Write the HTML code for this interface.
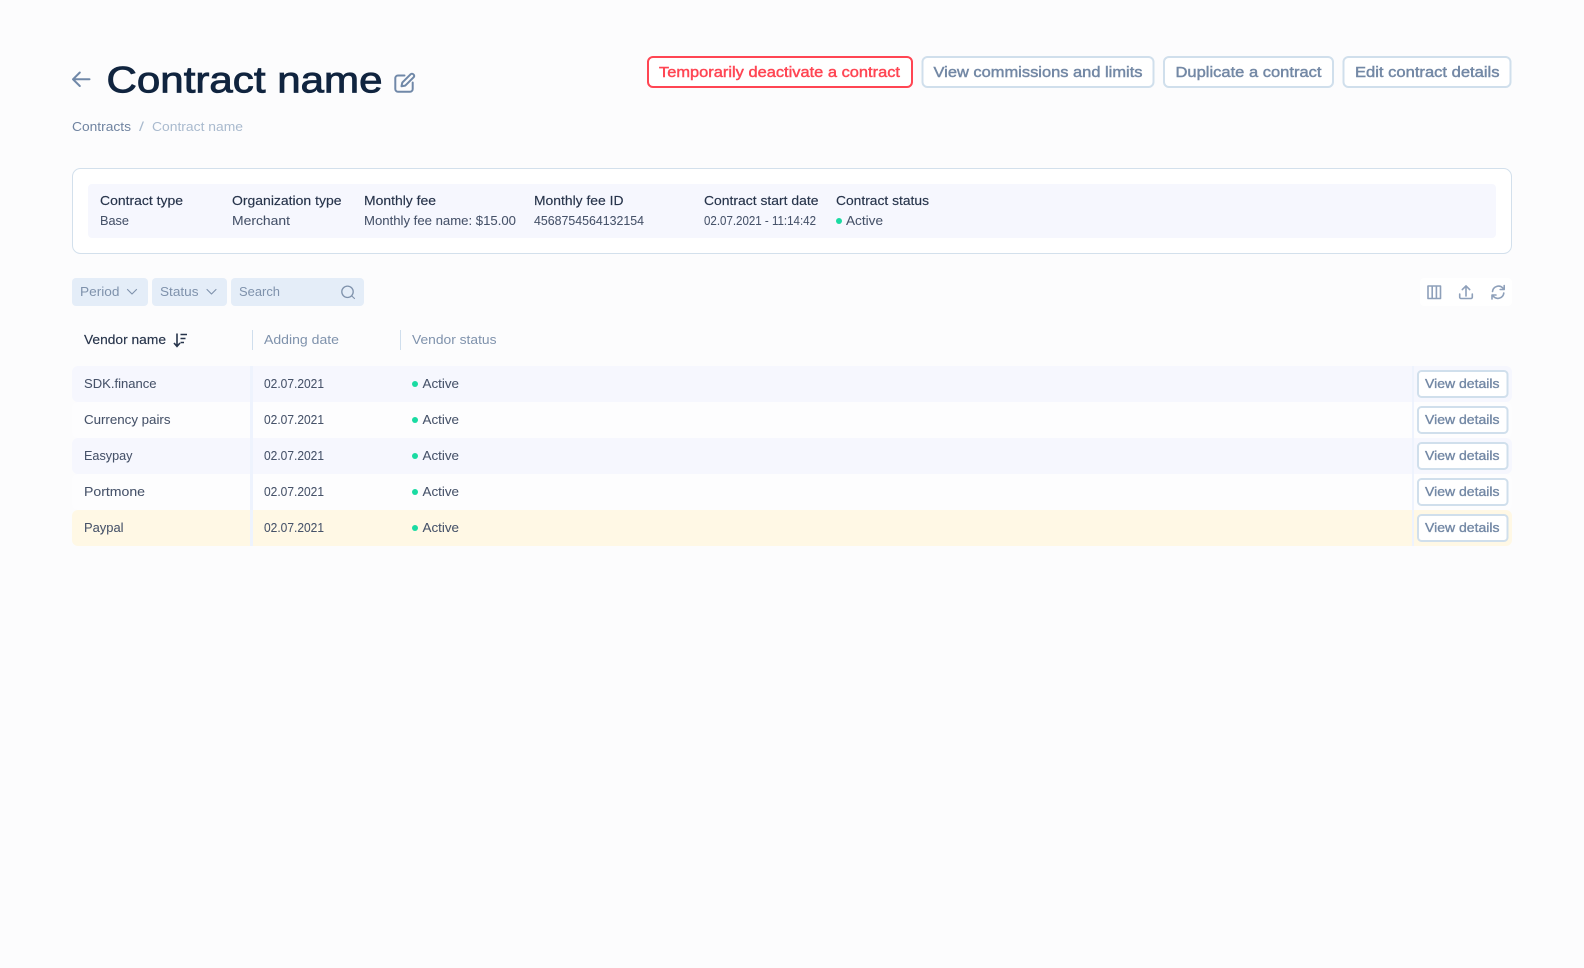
<!DOCTYPE html>
<html><head><meta charset="utf-8"><title>Contract name</title>
<style>
html,body{margin:0;padding:0;background:#fcfcfd;width:1584px;height:968px;overflow:hidden}
svg{display:block;position:absolute;left:0;top:0}
text{font-family:"Liberation Sans",Arial,sans-serif;font-size:13px}
.lab{fill:#27344b;stroke:#27344b;stroke-width:.15}
.val{fill:#465269;stroke:#465269;stroke-width:.05}
.btn{font-size:15px;fill:#7388a5;stroke:#7388a5;stroke-width:.45}
.vd{fill:#7388a5;stroke:#7388a5;stroke-width:.35}
.fil{fill:#7f92ac}
.hd{fill:#7f92ac}
.ic{fill:none;stroke:#7088a8;stroke-width:2;stroke-linecap:round;stroke-linejoin:round}
.ic2{fill:none;stroke:#7f92ac;stroke-width:1.1;stroke-linecap:round;stroke-linejoin:round}
.tb{fill:none;stroke:#8ea0ba;stroke-width:1.6;stroke-linecap:round;stroke-linejoin:round}
</style></head>
<body>
<svg width="1584" height="968" viewBox="0 0 1584 968" xmlns="http://www.w3.org/2000/svg">
<rect width="1584" height="968" fill="#fcfcfd"/>

<!-- header -->
<path class="ic" d="M89.5 79.3H73 M79.8 72.5L73 79.3L79.8 86"/>
<text x="106.5" y="92.5" textLength="276" lengthAdjust="spacingAndGlyphs" style="font-size:37px;fill:#10243f;stroke:#10243f;stroke-width:.85">Contract name</text>
<path class="ic" d="M404.5 75.5H398a2.7 2.7 0 0 0-2.7 2.7v10.8a2.7 2.7 0 0 0 2.7 2.7h12a2.7 2.7 0 0 0 2.7-2.7v-6.5"/>
<path class="ic" d="M401.5 86.2l.8-3.6 8.4-8.4a1.8 1.8 0 0 1 2.5 0l.5.5a1.8 1.8 0 0 1 0 2.5l-8.4 8.4z"/>

<text x="72" y="131" textLength="59" lengthAdjust="spacingAndGlyphs" fill="#6f83a0">Contracts</text>
<text x="139" y="131" textLength="5" lengthAdjust="spacingAndGlyphs" fill="#a9bace">/</text>
<text x="152" y="131" textLength="91" lengthAdjust="spacingAndGlyphs" fill="#a9bace">Contract name</text>

<!-- action buttons -->
<rect x="648" y="57" width="264" height="30" rx="5" fill="#fff" stroke="#ff4553" stroke-width="2"/>
<text x="659" y="77" textLength="241" lengthAdjust="spacingAndGlyphs" class="btn" style="fill:#ff4553;stroke:#ff4553">Temporarily deactivate a contract</text>
<rect x="922.5" y="57" width="231" height="30" rx="5" fill="#fff" stroke="#d0dfec" stroke-width="2"/>
<text x="933.5" y="77" textLength="209" lengthAdjust="spacingAndGlyphs" class="btn">View commissions and limits</text>
<rect x="1164" y="57" width="169" height="30" rx="5" fill="#fff" stroke="#d0dfec" stroke-width="2"/>
<text x="1175.5" y="77" textLength="146" lengthAdjust="spacingAndGlyphs" class="btn">Duplicate a contract</text>
<rect x="1343.5" y="57" width="167" height="30" rx="5" fill="#fff" stroke="#d0dfec" stroke-width="2"/>
<text x="1355" y="77" textLength="144.5" lengthAdjust="spacingAndGlyphs" class="btn">Edit contract details</text>

<!-- info card -->
<rect x="72.5" y="168.5" width="1439" height="85" rx="8" fill="#fff" stroke="#d3e0ec"/>
<rect x="88" y="184" width="1408" height="54" rx="4" fill="#f6f7fe"/>
<text x="100" y="205" textLength="83" lengthAdjust="spacingAndGlyphs" class="lab">Contract type</text>
<text x="100" y="225" textLength="29" lengthAdjust="spacingAndGlyphs" class="val">Base</text>
<text x="232" y="205" textLength="109.5" lengthAdjust="spacingAndGlyphs" class="lab">Organization type</text>
<text x="232" y="225" textLength="58" lengthAdjust="spacingAndGlyphs" class="val">Merchant</text>
<text x="364" y="205" textLength="72" lengthAdjust="spacingAndGlyphs" class="lab">Monthly fee</text>
<text x="364" y="225" textLength="152" lengthAdjust="spacingAndGlyphs" class="val">Monthly fee name: $15.00</text>
<text x="534" y="205" textLength="89.5" lengthAdjust="spacingAndGlyphs" class="lab">Monthly fee ID</text>
<text x="534" y="225" textLength="110" lengthAdjust="spacingAndGlyphs" class="val">4568754564132154</text>
<text x="704" y="205" textLength="114.5" lengthAdjust="spacingAndGlyphs" class="lab">Contract start date</text>
<text x="704" y="225" textLength="112" lengthAdjust="spacingAndGlyphs" class="val">02.07.2021 - 11:14:42</text>
<text x="836" y="205" textLength="93" lengthAdjust="spacingAndGlyphs" class="lab">Contract status</text>
<circle cx="839" cy="221" r="3" fill="#1adba2"/>
<text x="846" y="225" textLength="37" lengthAdjust="spacingAndGlyphs" class="val">Active</text>

<!-- filters -->
<rect x="72" y="278" width="76" height="28" rx="4" fill="#e4edf8"/>
<text x="80" y="296" textLength="39.5" lengthAdjust="spacingAndGlyphs" class="fil">Period</text>
<path class="ic2" d="M127.5 289.5l4.5 4.5 4.5-4.5"/>
<rect x="152" y="278" width="75" height="28" rx="4" fill="#e4edf8"/>
<text x="160" y="296" textLength="38.5" lengthAdjust="spacingAndGlyphs" class="fil">Status</text>
<path class="ic2" d="M207 289.5l4.5 4.5 4.5-4.5"/>
<rect x="231" y="278" width="133" height="28" rx="4" fill="#e4edf8"/>
<text x="239" y="296" textLength="41" lengthAdjust="spacingAndGlyphs" class="fil">Search</text>
<circle cx="347.5" cy="291.8" r="5.7" fill="none" stroke="#7f92ac" stroke-width="1.3"/>
<path class="ic2" d="M351.8 296l2.7 2.5"/>

<!-- toolbar -->
<rect x="1420" y="278" width="92" height="28" rx="4" fill="#fff"/>
<path class="tb" d="M1428 286h12.5v12.5h-12.5z M1432.2 286v12.5 M1436.4 286v12.5" stroke-linecap="butt"/>
<path class="tb" d="M1466 296v-9.5 M1462.3 289.6l3.7-3.7 3.7 3.7 M1459.7 294v3.2a1.3 1.3 0 0 0 1.3 1.3h10a1.3 1.3 0 0 0 1.3-1.3V294"/>
<path class="tb" d="M1492.5 291.5a6 6 0 0 1 10.3-3.5l1.2 1.3 M1504.2 285.5v4h-4 M1503.8 293a6 6 0 0 1-10.3 3.5l-1.2-1.3 M1492 299v-4h4"/>

<!-- table head -->
<text x="84" y="344" textLength="82" lengthAdjust="spacingAndGlyphs" class="lab">Vendor name</text>
<path d="M177 333.500v12.500 M174 343l3 3.400 3-3.400" fill="none" stroke="#27344b" stroke-width="1.600"/>
<path d="M180.500 334.500h6.500 M180.500 338.500h5 M180.500 342.500h3.500" fill="none" stroke="#27344b" stroke-width="1.500"/>
<rect x="252" y="330" width="1" height="20" fill="#cfdeed"/>
<text x="264" y="344" textLength="75" lengthAdjust="spacingAndGlyphs" class="hd">Adding date</text>
<rect x="400" y="330" width="1" height="20" fill="#cfdeed"/>
<text x="412" y="344" textLength="84.5" lengthAdjust="spacingAndGlyphs" class="hd">Vendor status</text>

<!-- rows -->
<rect x="72" y="366" width="1440" height="36" rx="6" fill="#f6f7fe"/>
<rect x="72" y="402" width="1440" height="36" rx="6" fill="#fdfdfe"/>
<rect x="72" y="438" width="1440" height="36" rx="6" fill="#f6f7fe"/>
<rect x="72" y="474" width="1440" height="36" rx="6" fill="#fdfdfe"/>
<rect x="72" y="510" width="1440" height="36" rx="6" fill="#fff8e5"/>
<rect x="250" y="366" width="3" height="180" fill="#eef3fd"/>
<rect x="1412" y="366" width="2" height="180" fill="#eef3fd"/>

<text x="84" y="388" textLength="72.5" lengthAdjust="spacingAndGlyphs" class="val">SDK.finance</text>
<text x="84" y="424" textLength="86.5" lengthAdjust="spacingAndGlyphs" class="val">Currency pairs</text>
<text x="84" y="460" textLength="48.5" lengthAdjust="spacingAndGlyphs" class="val">Easypay</text>
<text x="84" y="496" textLength="61" lengthAdjust="spacingAndGlyphs" class="val">Portmone</text>
<text x="84" y="532" textLength="39.5" lengthAdjust="spacingAndGlyphs" class="val">Paypal</text>

<text x="264" y="388" textLength="60" lengthAdjust="spacingAndGlyphs" class="val">02.07.2021</text>
<text x="264" y="424" textLength="60" lengthAdjust="spacingAndGlyphs" class="val">02.07.2021</text>
<text x="264" y="460" textLength="60" lengthAdjust="spacingAndGlyphs" class="val">02.07.2021</text>
<text x="264" y="496" textLength="60" lengthAdjust="spacingAndGlyphs" class="val">02.07.2021</text>
<text x="264" y="532" textLength="60" lengthAdjust="spacingAndGlyphs" class="val">02.07.2021</text>

<circle cx="415" cy="384" r="3" fill="#1adba2"/>
<circle cx="415" cy="420" r="3" fill="#1adba2"/>
<circle cx="415" cy="456" r="3" fill="#1adba2"/>
<circle cx="415" cy="492" r="3" fill="#1adba2"/>
<circle cx="415" cy="528" r="3" fill="#1adba2"/>
<text x="422.5" y="388" textLength="36.5" lengthAdjust="spacingAndGlyphs" class="val">Active</text>
<text x="422.5" y="424" textLength="36.5" lengthAdjust="spacingAndGlyphs" class="val">Active</text>
<text x="422.5" y="460" textLength="36.5" lengthAdjust="spacingAndGlyphs" class="val">Active</text>
<text x="422.5" y="496" textLength="36.5" lengthAdjust="spacingAndGlyphs" class="val">Active</text>
<text x="422.5" y="532" textLength="36.5" lengthAdjust="spacingAndGlyphs" class="val">Active</text>

<g fill="#fff" stroke="#d0dfec" stroke-width="2">
<rect x="1418" y="371" width="89.5" height="26" rx="3.5"/>
<rect x="1418" y="407" width="89.5" height="26" rx="3.5"/>
<rect x="1418" y="443" width="89.5" height="26" rx="3.5"/>
<rect x="1418" y="479" width="89.5" height="26" rx="3.5"/>
<rect x="1418" y="515" width="89.5" height="26" rx="3.5"/>
</g>
<text x="1425" y="388" textLength="74.5" lengthAdjust="spacingAndGlyphs" class="vd">View details</text>
<text x="1425" y="424" textLength="74.5" lengthAdjust="spacingAndGlyphs" class="vd">View details</text>
<text x="1425" y="460" textLength="74.5" lengthAdjust="spacingAndGlyphs" class="vd">View details</text>
<text x="1425" y="496" textLength="74.5" lengthAdjust="spacingAndGlyphs" class="vd">View details</text>
<text x="1425" y="532" textLength="74.5" lengthAdjust="spacingAndGlyphs" class="vd">View details</text>
</svg>
</body></html>
